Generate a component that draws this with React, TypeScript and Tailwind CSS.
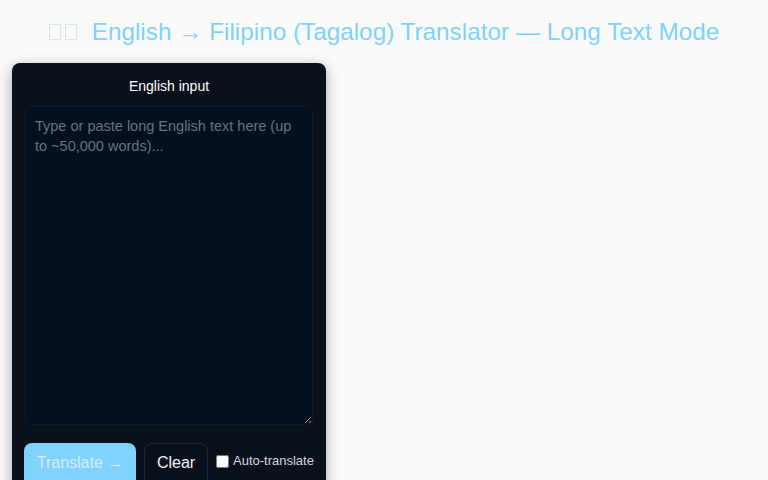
import { useState } from "react";

export default function App() {
  const [text, setText] = useState("");
  const [auto, setAuto] = useState(false);

  return (
    <div className="min-h-screen bg-[#fafafa] font-['Liberation_Sans',Arial,sans-serif]">
      <h1 className="flex items-center justify-center pt-[17px] pb-[16px] text-center text-[24.3px] leading-[30px] text-[#7dd3fc]">
        {/* flag glyphs missing in font: drawn as empty boxes */}
        <span className="mr-[4px] inline-block h-[16px] w-[12px] border border-[#cfe8f7]"></span>
        <span className="mr-[15px] inline-block h-[16px] w-[12px] border border-[#cfe8f7]"></span>
        English → Filipino (Tagalog) Translator — Long Text Mode
      </h1>
      <div className="px-3">
        {/* input card */}
        <div className="w-[314px] rounded-lg bg-[#0b111c] px-3 pt-[13px] pb-6 shadow-[0_4px_14px_rgba(0,0,0,0.35)]">
          <div className="mb-[10px] text-center text-sm leading-5 font-medium text-white">English input</div>
          <textarea
            className="mx-px block h-[319px] w-[288px] rounded-md border border-[#0f1a2a] bg-[#03101f] px-[9px] py-[9px] text-[14.5px] leading-5 text-gray-200 placeholder:text-[#6b7280] focus:outline-0"
            placeholder="Type or paste long English text here (up to ~50,000 words)..."
            value={text}
            onChange={(e) => setText(e.target.value)}
          ></textarea>
          <div className="mt-[18px] flex items-start gap-2">
            <button
              disabled={!text}
              className="w-[112px] rounded-lg bg-[#7dd3fc] pt-2 pb-4 text-base leading-6 text-[#dbeafe] disabled:opacity-100"
            >
              Translate →
            </button>
            <button className="w-[64px] rounded-lg border border-[#1e293b] bg-[#0b111c] pt-[7px] pb-[15px] text-base leading-6 text-gray-100">
              Clear
            </button>
            <label className="mt-[10px] flex items-center gap-1 text-[13px] leading-4 text-gray-300">
              <input
                type="checkbox"
                className="h-[13px] w-[13px]"
                checked={auto}
                onChange={(e) => setAuto(e.target.checked)}
              />
              Auto-translate
            </label>
          </div>
        </div>
      </div>
    </div>
  );
}
